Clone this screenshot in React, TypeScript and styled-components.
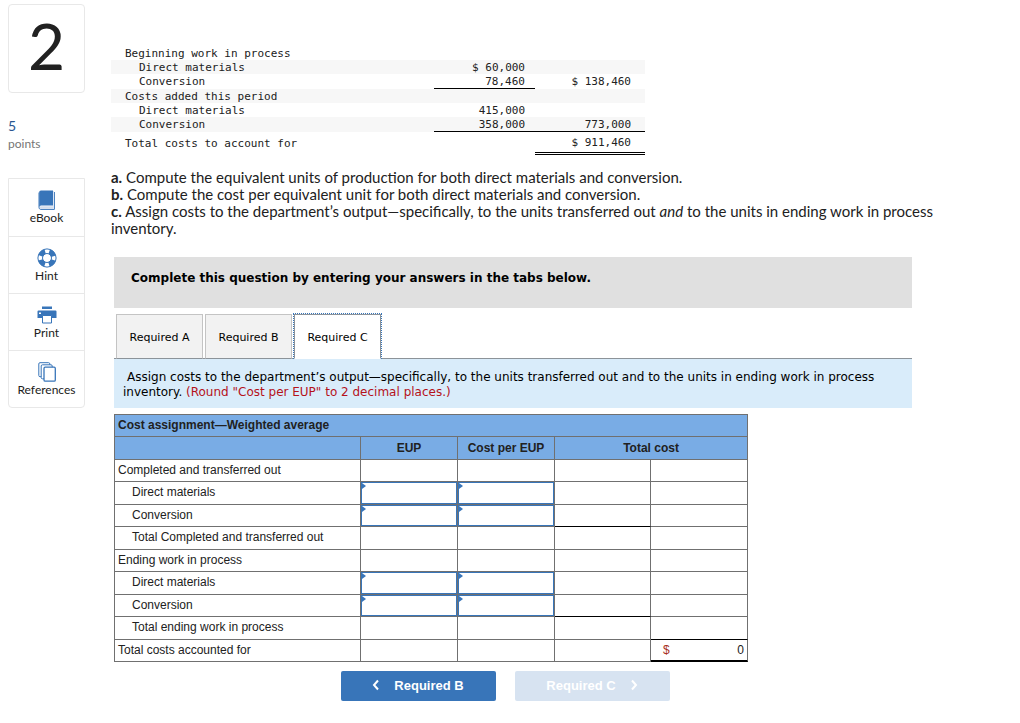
import React, { useState } from "react";
import styled, { createGlobalStyle } from "styled-components";

const sans = `Lato, "Open Sans", sans-serif`;
const verdana = `"DejaVu Sans", Verdana, sans-serif`;
const arial = `"Liberation Sans", Arial, sans-serif`;
const mono = `"DejaVu Sans Mono", Consolas, monospace`;

const GlobalStyle = createGlobalStyle`
  * { box-sizing: border-box; }
  body { margin: 0; background: #fff; color: #212121; font-family: ${sans}; }
  button { font: inherit; cursor: pointer; }
`;

const Page = styled.div`
  display: flex;
  align-items: flex-start;
  gap: 26px;
  padding: 4px 80px 20px 8px;
`;

const Sidebar = styled.aside`
  flex: none;
  width: 77px;
`;

const QuestionNumber = styled.div`
  display: flex;
  align-items: center;
  justify-content: center;
  height: 89px;
  padding-bottom: 5px;
  border: 1px solid #e8e8e8;
  border-radius: 4px;
  font-size: 64px;
  line-height: 64px;
`;

const Points = styled.div`
  padding: 24px 0 26px;
  color: #757575;
  font-size: 12px;
  line-height: 17px;
`;

const PointValue = styled.div`
  color: #28568f;
  font-size: 14px;
  line-height: 18px;
`;

const Tools = styled.nav`
  display: flex;
  flex-direction: column;
  border: 1px solid #e8e8e8;
  border-radius: 0 0 4px 4px;
`;

const Tool = styled.button`
  display: flex;
  flex-direction: column;
  align-items: center;
  height: 57px;
  padding: 11px 0 0;
  border: 0;
  background: none;
  color: #212121;
  font-size: 12px;
  line-height: 15px;
  & + & { border-top: 1px solid #e8e8e8; }
`;

const Main = styled.main`
  flex: 1;
  min-width: 0;
  padding-top: 42px;
`;

const Ledger = styled.table`
  border-collapse: separate;
  border-spacing: 0;
  table-layout: fixed;
  width: 534px;
  font-family: ${mono};
  font-size: 11px;
  line-height: 13px;
`;

const Column = styled.col<{ $w: number }>`
  width: ${(p) => p.$w}px;
`;

const LedgerRow = styled.tr<{ $h: number; $band?: boolean }>`
  height: ${(p) => p.$h}px;
  background: ${(p) => (p.$band ? "#f7f7f7" : "none")};
`;

const LedgerLabel = styled.th<{ $indent?: boolean }>`
  padding: 0 0 0 ${(p) => (p.$indent ? 28 : 14)}px;
  font-weight: 400;
  text-align: left;
`;

const LedgerValue = styled.td<{ $rule?: "single" | "double"; $pad: number }>`
  padding: 0 ${(p) => p.$pad}px 0 0;
  text-align: right;
  white-space: pre;
  border-bottom: ${(p) =>
    p.$rule === "single" ? "1px solid #000" : p.$rule === "double" ? "3px double #000" : "0"};
`;

const Instructions = styled.div`
  margin-top: 14px;
  font-size: 15px;
  line-height: 17px;
  p { margin: 0; }
`;

const Worksheet = styled.section`
  margin: 20px 28px 0 3px;
`;

const Banner = styled.div`
  height: 51px;
  padding: 13px 17px;
  background: #e0e0e0;
  color: #000;
  font: bold 12px/17px ${verdana};
`;

const TabList = styled.div`
  display: flex;
  gap: 2px;
  padding: 6px 2px 0;
  border-bottom: 1px solid #8c9399;
`;

const Tab = styled.button<{ $active: boolean }>`
  position: relative;
  width: 87px;
  height: 45px;
  margin-bottom: -1px;
  padding: 2px 0 0;
  border: 1px solid ${(p) => (p.$active ? "#8c9399" : "#c4c4c4")};
  border-bottom-color: ${(p) => (p.$active ? "#fff" : "#8c9399")};
  background: ${(p) => (p.$active ? "#fff" : "#f2f2f2")};
  color: #000;
  font-family: ${verdana};
  font-size: 11px;
  outline: 0;
  &::before {
    content: "";
    display: ${(p) => (p.$active ? "block" : "none")};
    position: absolute;
    inset: -2px -2px -1px;
    border: 1px dotted #3875b9;
    border-bottom: 0;
  }
`;

const Prompt = styled.div`
  min-height: 49px;
  padding: 11px 9px 8px;
  background: #d9ecfa;
  color: #000;
  font-family: ${verdana};
  font-size: 12px;
  line-height: 15px;
  text-indent: 4px;
`;

const Rounding = styled.span`
  color: #b5121b;
`;

const CostTable = styled.table`
  margin-top: 6px;
  border: solid #707070;
  border-width: 1px 0 0 1px;
  border-collapse: separate;
  border-spacing: 0;
  table-layout: fixed;
  width: 634px;
  font-family: ${arial};
  font-size: 12px;
  line-height: 15px;
  th, td {
    border: solid #707070;
    border-width: 0 1px 1px 0;
    padding: 0;
  }
  tr { height: 22px; }
  thead tr:last-child, tbody tr:nth-child(even) { height: 23px; }
`;

const CostHead = styled.th<{ $left?: boolean }>`
  && { padding: 0 3px; }
  background: #79ace5;
  text-align: ${(p) => (p.$left ? "left" : "center")};
`;

const CostLabel = styled.th<{ $indent?: boolean }>`
  && { padding: 0 0 1px ${(p) => (p.$indent ? 17 : 3)}px; }
  font-weight: 400;
  text-align: left;
`;

const CostCell = styled.td<{ $rule?: boolean; $total?: boolean }>`
  && {
    border-bottom-color: ${(p) => (p.$rule || p.$total ? "#000" : "#707070")};
    border-bottom-width: ${(p) => (p.$total ? 2 : 1)}px;
  }
`;

const Amount = styled.span`
  display: flex;
  justify-content: space-between;
  padding: 0 3px 0 12px;
`;

const Currency = styled.span`
  color: #a8321e;
`;

const Field = styled.label<{ $h: number }>`
  display: block;
  position: relative;
  height: ${(p) => p.$h}px;
  &::before {
    content: "";
    position: absolute;
    left: 1px;
    top: 1px;
    border: 3px solid transparent;
    border-left: 4px solid #3875b9;
    border-right: 0;
  }
`;

const FieldInput = styled.input`
  display: block;
  width: 100%;
  height: 100%;
  padding: 0 4px;
  border: 1px solid #3875b9;
  border-radius: 0;
  background: #fff;
  font: inherit;
  text-align: right;
`;

const Pager = styled.div`
  display: flex;
  justify-content: center;
  gap: 19px;
  margin-top: 9px;
  padding-right: 16px;
`;

const PagerButton = styled.button`
  display: flex;
  align-items: center;
  justify-content: center;
  gap: 14px;
  width: 155px;
  height: 30px;
  padding: 0 0 2px;
  border: 0;
  border-radius: 2px;
  background: #3875b9;
  color: #fff;
  font-family: ${arial};
  font-size: 13px;
  font-weight: 700;
  &:disabled { background: #d7e3f1; cursor: default; }
`;

const BookIcon = () => (
  <svg width="18" height="20" viewBox="0 0 18 20" aria-hidden="true">
    <path d="M3 .5h12v15H3.2C2 15.5 1.4 16.300 1.200 17V2.500C1.200 1.200 1.800.5 3 .5z" fill="#3875b9" />
    <path d="M2.600 16.200H15v2.200H2.600c-1.200 0-1.200-2.200 0-2.200z" fill="#d3ddec" />
    <path d="M1 2.500v14.700C1 18.700 1.800 19.400 3 19.400h13.400V2" fill="none" stroke="#3875b9" />
    <path d="M15.500 1v17.500" stroke="#dce6f4" />
  </svg>
);

const HintIcon = () => (
  <svg width="20" height="20" viewBox="0 0 20 20" aria-hidden="true">
    <circle cx="10" cy="10" r="6.700" fill="none" stroke="#3875b9" strokeWidth="5" strokeDasharray="6.400 4.124" strokeDashoffset="-2.060" />
    <circle cx="10" cy="10" r="9.100" fill="none" stroke="#3875b9" />
    <circle cx="10" cy="10" r="4.500" fill="none" stroke="#3875b9" />
  </svg>
);

const PrintIcon = () => (
  <svg width="20" height="20" viewBox="0 0 20 20" aria-hidden="true">
    <path d="M5 1.500h10v2.500H5z" fill="#3875b9" />
    <path d="M1.500 5.500h17a1 1 0 0 1 1 1V13H.5V6.500a1 1 0 0 1 1-1z" fill="#3875b9" />
    <path d="M5.500 10.500h9v7.500h-9z" fill="#fff" stroke="#3875b9" />
    <path d="M2 7.500h2v1.500H2z" fill="#fff" />
  </svg>
);

const ReferencesIcon = () => (
  <svg width="18" height="20" viewBox="0 0 18 20" fill="#fff" stroke="#3875b9" aria-hidden="true">
    <rect x=".8" y=".7" width="11" height="14" rx="1.200" />
    <rect x="3.200" y="2.800" width="11" height="14" rx="1.200" />
    <rect x="6" y="5.200" width="11.300" height="14" rx="1.200" strokeWidth="1.300" />
  </svg>
);

const Chevron = ({ d }: { d: string }) => (
  <svg width="8" height="12" viewBox="0 0 8 12" fill="none" stroke="#fff" strokeWidth="2" aria-hidden="true">
    <path d={d} />
  </svg>
);

const tools = [
  { label: "eBook", Icon: BookIcon },
  { label: "Hint", Icon: HintIcon },
  { label: "Print", Icon: PrintIcon },
  { label: "References", Icon: ReferencesIcon },
];

type Rule = "single" | "double";
interface LedgerLine {
  label: string;
  indent?: boolean;
  height: number;
  amount?: string;
  amountRule?: Rule;
  total?: string;
  totalRule?: Rule;
}

const ledger: LedgerLine[] = [
  { label: "Beginning work in process", height: 14 },
  { label: "Direct materials", indent: true, height: 14, amount: "$ 60,000" },
  { label: "Conversion", indent: true, height: 15, amount: "78,460", amountRule: "single", total: "$ 138,460" },
  { label: "Costs added this period", height: 14 },
  { label: "Direct materials", indent: true, height: 14, amount: "415,000" },
  { label: "Conversion", indent: true, height: 15, amount: "358,000", amountRule: "single", total: "773,000", totalRule: "single" },
  { label: "Total costs to account for", height: 23, total: "$ 911,460", totalRule: "double" },
];

interface CostLine {
  label: string;
  indent?: boolean;
  fieldHeight?: number;
  rule?: boolean;
  totalRule?: boolean;
  grand?: boolean;
}

const costs: CostLine[] = [
  { label: "Completed and transferred out" },
  { label: "Direct materials", indent: true, fieldHeight: 22 },
  { label: "Conversion", indent: true, fieldHeight: 21, rule: true },
  { label: "Total Completed and transferred out", indent: true },
  { label: "Ending work in process" },
  { label: "Direct materials", indent: true, fieldHeight: 22 },
  { label: "Conversion", indent: true, fieldHeight: 21, rule: true },
  { label: "Total ending work in process", indent: true, totalRule: true },
  { label: "Total costs accounted for", grand: true },
];

const tabs = ["Required A", "Required B", "Required C"];

export default function App() {
  const [active, setActive] = useState(2);

  return (
    <>
      <GlobalStyle />
      <Page>
        <Sidebar>
          <QuestionNumber>2</QuestionNumber>
          <Points>
            <PointValue>5</PointValue>
            points
          </Points>
          <Tools>
            {tools.map(({ label, Icon }) => (
              <Tool key={label} type="button">
                <Icon />
                {label}
              </Tool>
            ))}
          </Tools>
        </Sidebar>

        <Main>
          <Ledger>
            <colgroup>
              <Column $w={323} />
              <Column $w={101} />
              <Column $w={110} />
            </colgroup>
            <tbody>
              {ledger.map((line, i) => (
                <LedgerRow key={i} $h={line.height} $band={i % 2 === 1}>
                  <LedgerLabel scope="row" $indent={line.indent}>{line.label}</LedgerLabel>
                  <LedgerValue $pad={10} $rule={line.amountRule}>{line.amount}</LedgerValue>
                  <LedgerValue $pad={14} $rule={line.totalRule}>{line.total}</LedgerValue>
                </LedgerRow>
              ))}
            </tbody>
          </Ledger>

          <Instructions>
            <p><b>a.</b> Compute the equivalent units of production for both direct materials and conversion.</p>
            <p><b>b.</b> Compute the cost per equivalent unit for both direct materials and conversion.</p>
            <p>
              <b>c.</b> Assign costs to the department’s output—specifically, to the units transferred out <i>and</i> to
              the units in ending work in process inventory.
            </p>
          </Instructions>

          <Worksheet>
            <Banner>Complete this question by entering your answers in the tabs below.</Banner>
            <TabList role="tablist">
              {tabs.map((tab, i) => (
                <Tab key={tab} type="button" role="tab" aria-selected={i === active} $active={i === active} onClick={() => setActive(i)}>
                  {tab}
                </Tab>
              ))}
            </TabList>
            <Prompt>
              Assign costs to the department’s output—specifically, to the units transferred out and to the units in
              ending work in process inventory. <Rounding>(Round "Cost per EUP" to 2 decimal places.)</Rounding>
            </Prompt>

            <CostTable>
              <colgroup>
                <Column $w={246} />
                <Column $w={97} />
                <Column $w={97} />
                <Column $w={96} />
                <Column $w={97} />
              </colgroup>
              <thead>
                <tr>
                  <CostHead colSpan={5} $left>Cost assignment—Weighted average</CostHead>
                </tr>
                <tr>
                  <CostHead />
                  <CostHead scope="col">EUP</CostHead>
                  <CostHead scope="col">Cost per EUP</CostHead>
                  <CostHead scope="colgroup" colSpan={2}>Total cost</CostHead>
                </tr>
              </thead>
              <tbody>
                {costs.map((line, i) => (
                  <tr key={i}>
                    <CostLabel scope="row" $indent={line.indent}>{line.label}</CostLabel>
                    {["EUP", "Cost per EUP"].map((name) => (
                      <CostCell key={name}>
                        {line.fieldHeight && (
                          <Field $h={line.fieldHeight}>
                            <FieldInput type="text" aria-label={`${line.label}, ${name}`} />
                          </Field>
                        )}
                      </CostCell>
                    ))}
                    <CostCell $rule={line.rule} />
                    <CostCell $rule={line.totalRule} $total={line.grand}>
                      {line.grand && (
                        <Amount>
                          <Currency>$</Currency>
                          <span>0</span>
                        </Amount>
                      )}
                    </CostCell>
                  </tr>
                ))}
              </tbody>
            </CostTable>

            <Pager>
              <PagerButton type="button">
                <Chevron d="M6 1.500 2 6l4 4.500" />
                Required B
              </PagerButton>
              <PagerButton type="button" disabled>
                Required C
                <Chevron d="M2 1.500 6 6l-4 4.500" />
              </PagerButton>
            </Pager>
          </Worksheet>
        </Main>
      </Page>
    </>
  );
}
